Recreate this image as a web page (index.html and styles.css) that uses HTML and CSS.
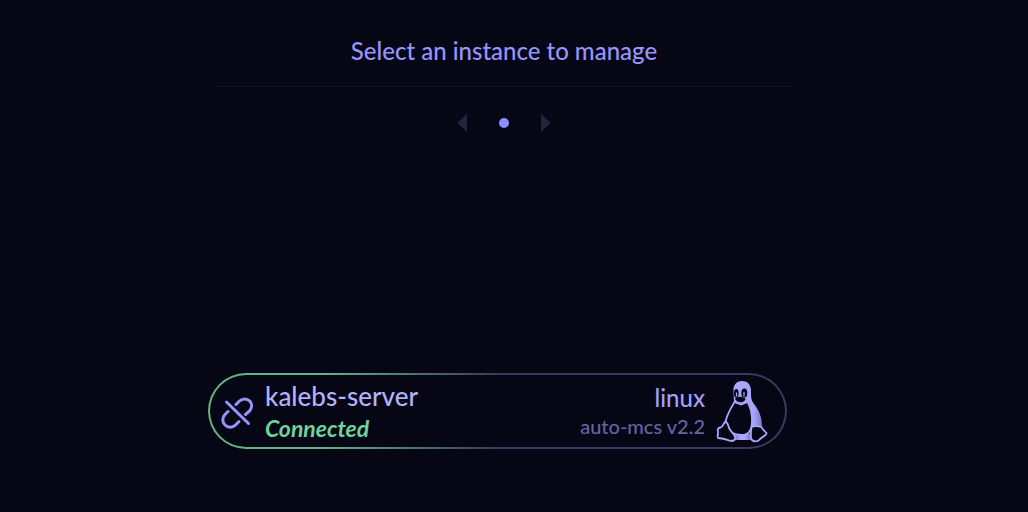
FILE: index.html
```html
<!DOCTYPE html>
<html lang="en">
<head>
<meta charset="utf-8">
<meta name="viewport" content="width=device-width, initial-scale=1">
<title>Select an instance</title>
<link rel="stylesheet" href="styles.css">
</head>
<body>
<main class="screen">
  <header class="header">
    <h1 class="title">Select an instance to manage</h1>
  </header>
  <nav class="pager" aria-label="Pages">
    <button class="pager-button" type="button" aria-label="Previous page"><svg width="10" height="18" viewBox="0 0 10 18"><path d="M10 0V18L0 9Z"/></svg></button>
    <span class="dot"></span>
    <button class="pager-button" type="button" aria-label="Next page"><svg width="10" height="18" viewBox="0 0 10 18"><path d="M0 0V18L10 9Z"/></svg></button>
  </nav>
  <section class="instance">
    <button class="disconnect" type="button" aria-label="Disconnect">
      <svg width="32" height="32" viewBox="0 0 32 32" fill="none" stroke="#9694ff" stroke-width="3" stroke-linecap="round">
        <path d="M5.5 5L27.5 26.5"/>
        <path d="M15 7.5L18.5 4C21.5 1.2 26 1.2 28.7 4C31.4 7 31 11 28.5 14L24.5 17.5"/>
        <path d="M7 14.5L4 17.5C1 20.5 1 25 4 28C7 31 11.5 31 14.5 28L18 24.5"/>
      </svg>
    </button>
    <div class="info">
      <h2 class="name">kalebs-server</h2>
      <p class="status">Connected</p>
    </div>
    <div class="info platform">
      <p class="os">linux</p>
      <p class="version">auto-mcs v2.2</p>
    </div>
    <svg class="tux" width="58" height="68" viewBox="0 0 58 68" aria-hidden="true">
      <defs>
        <linearGradient id="coat" x1="0" x2="1"><stop offset="0" stop-color="#aaa8ff"/><stop offset=".7" stop-color="#a6a4fa"/><stop offset="1" stop-color="#7d7bc2"/></linearGradient>
        <linearGradient id="tail" x1="0" x2="1"><stop offset="0" stop-color="#7774b8"/><stop offset=".4" stop-color="#aaa8ff"/><stop offset=".65" stop-color="#aaa8ff"/><stop offset="1" stop-color="#7774b8"/></linearGradient>
      </defs>
      <path fill="url(#coat)" d="M20.5 15C20 8 23 4 29 4C35 4 38 8 38 14C38 20 38 23 41 27C47 34 49 42 49 50H38C39 40 39 33 35 25L28 27L21 25Z"/>
      <path fill="url(#tail)" d="M21 56C26 58 33 58 38 56V63H22Z"/>
      <path fill="#060614" stroke="#a8a6ff" stroke-width="1.8" d="M21.5 25C18 31 14 37 12.5 45C12 53 20 58 29 58C36 58 39 52 39 44C39 35 37 29 34.5 25L28 27.5Z"/>
      <g fill="#060614">
        <ellipse cx="23.3" cy="16.3" rx="2.3" ry="4.4"/>
        <ellipse cx="31.3" cy="16" rx="3" ry="4.6"/>
        <path d="M22 22C24 19.5 27 19 32 21.2C34 22.5 30 25.3 27.5 25.3C25 25.3 23 24 22 22Z"/>
      </g>
      <path fill="none" stroke="#aaa8ff" stroke-width="1.2" d="M23.5 15.5V19.5M31 15V19.5"/>
      <g fill="#060614" stroke="#aaa8ff" stroke-width="1.8" stroke-linejoin="round">
        <path d="M12 45C10 47 10 50 7.5 50.5C4 51 4.5 53 5 55C5.4 58 3.5 60 5 61C9 61 14 63 18 64C20 64 22 63 22.3 61C22.5 58 18 55 16 51C15 48 15 45 12 45Z"/>
        <path d="M38.5 50C41 49 45 49 48.5 50C49.5 53 52 54 53.5 56C54 58 49 60 47 62C45 65 41 65 39 63C37 61 38 54 38.5 50Z"/>
      </g>
    </svg>
  </section>
</main>
</body>
</html>
```
FILE: styles.css
```css
* {
  box-sizing: border-box;
}

body {
  margin: 0;
  background: #060614;
  color: #9694ff;
  font-family: Lato, "Noto Sans", sans-serif;
  font-weight: 500;
}

h1, h2, p {
  margin: 0;
  font-weight: 500;
}

button {
  display: flex;
  padding: 0;
  border: 0;
  background: none;
}

.screen {
  display: flex;
  flex-direction: column;
  align-items: center;
  min-height: 100vh;
  padding: 36px 32px 63px 12px;
}

.header {
  width: 100%;
  max-width: 576px;
  padding-bottom: 20px;
  border-bottom: 1px solid #131228;
  text-align: center;
}

.title {
  font-size: 24px;
  line-height: 30px;
}

.pager {
  display: flex;
  align-items: center;
  gap: 32px;
  margin: 27px 0 32px;
}

.pager-button {
  fill: #24233f;
}

.dot {
  width: 10px;
  height: 10px;
  border-radius: 50%;
  background: #8f8dff;
}

.instance {
  display: flex;
  align-items: center;
  width: 100%;
  max-width: 579px;
  margin-top: auto;
  margin-right: 13px;
  padding: 2px 14px 2px 11px;
  border: 2px solid transparent;
  border-radius: 38px;
  background:
    linear-gradient(#060614, #060614) padding-box,
    linear-gradient(90deg, #63b384 0%, #63b384 20%, #393961 50%, #393961 100%) border-box;
}

.disconnect {
  margin-top: 4px;
}

.info {
  margin-left: 12px;
}

.name {
  color: #b4b1ff;
  font-size: 26px;
  line-height: 34px;
}

.status {
  color: #6fd298;
  font-size: 23px;
  font-style: italic;
  font-weight: 700;
  line-height: 30px;
}

.platform {
  margin-left: auto;
  text-align: right;
}

.os {
  color: #a19fff;
  font-size: 24px;
  line-height: 30px;
}

.version {
  color: #6562a5;
  font-size: 20px;
  line-height: 26px;
}

.tux {
  margin-left: 8px;
}
```
